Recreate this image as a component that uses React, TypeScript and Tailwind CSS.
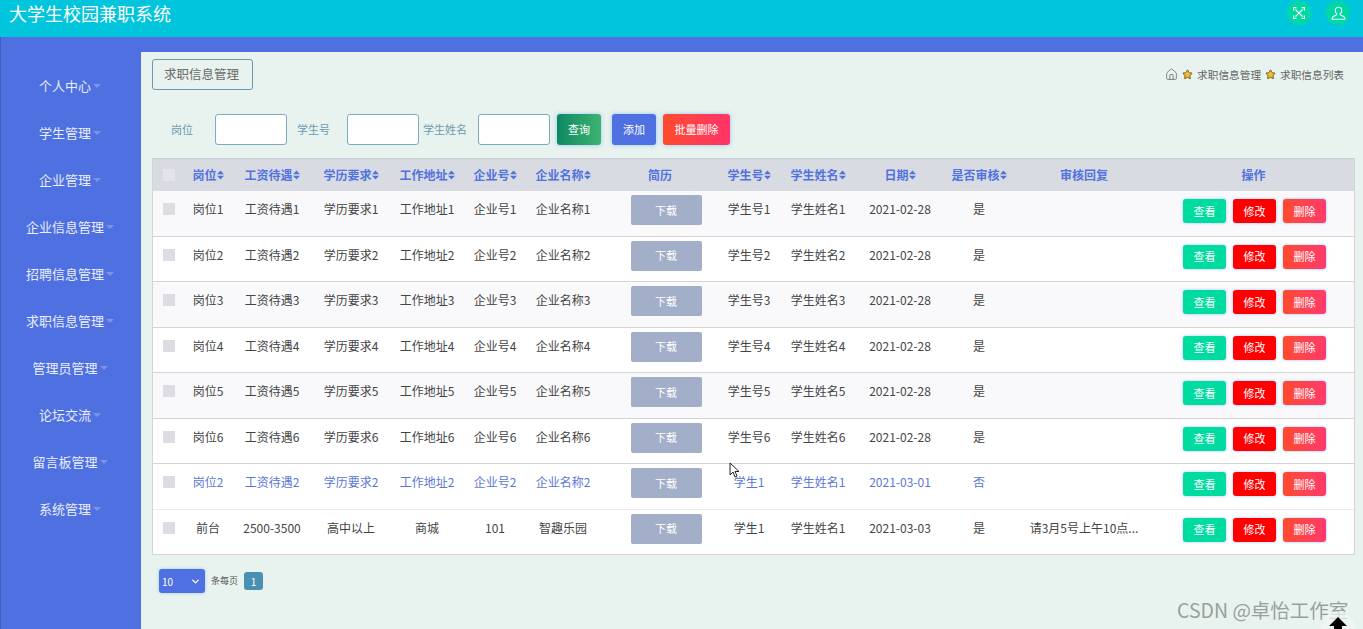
import { ChevronDown, House, Star } from "lucide-react";

const menus = ["个人中心", "学生管理", "企业管理", "企业信息管理", "招聘信息管理", "求职信息管理", "管理员管理", "论坛交流", "留言板管理", "系统管理"];

const cols = "grid grid-cols-[32px_46px_82px_76px_76px_60px_76px_118px_60px_78px_86px_72px_138px_1fr]";

const heads = [
  { label: "岗位", sort: true },
  { label: "工资待遇", sort: true },
  { label: "学历要求", sort: true },
  { label: "工作地址", sort: true },
  { label: "企业号", sort: true },
  { label: "企业名称", sort: true },
  { label: "简历", sort: false },
  { label: "学生号", sort: true },
  { label: "学生姓名", sort: true },
  { label: "日期", sort: true },
  { label: "是否审核", sort: true },
  { label: "审核回复", sort: false },
  { label: "操作", sort: false },
];

const rows = [
  ["岗位1", "工资待遇1", "学历要求1", "工作地址1", "企业号1", "企业名称1", "学生号1", "学生姓名1", "2021-02-28", "是", ""],
  ["岗位2", "工资待遇2", "学历要求2", "工作地址2", "企业号2", "企业名称2", "学生号2", "学生姓名2", "2021-02-28", "是", ""],
  ["岗位3", "工资待遇3", "学历要求3", "工作地址3", "企业号3", "企业名称3", "学生号3", "学生姓名3", "2021-02-28", "是", ""],
  ["岗位4", "工资待遇4", "学历要求4", "工作地址4", "企业号4", "企业名称4", "学生号4", "学生姓名4", "2021-02-28", "是", ""],
  ["岗位5", "工资待遇5", "学历要求5", "工作地址5", "企业号5", "企业名称5", "学生号5", "学生姓名5", "2021-02-28", "是", ""],
  ["岗位6", "工资待遇6", "学历要求6", "工作地址6", "企业号6", "企业名称6", "学生号6", "学生姓名6", "2021-02-28", "是", ""],
  ["岗位2", "工资待遇2", "学历要求2", "工作地址2", "企业号2", "企业名称2", "学生1", "学生姓名1", "2021-03-01", "否", ""],
  ["前台", "2500-3500", "高中以上", "商城", "101", "智趣乐园", "学生1", "学生姓名1", "2021-03-03", "是", "请3月5号上午10点..."],
];

function SortIcon() {
  return (
    <svg width="7" height="10" viewBox="0 0 7 10" className="shrink-0" fill="currentColor">
      <path d="M3.5 0.5 7 4.200H0z" />
      <path d="M3.5 9.500 0 5.800h7z" />
    </svg>
  );
}

function Row({ row, index }: { row: string[]; index: number }) {
  const tone = index === 6 ? "text-[#5b77d6]" : "text-[#444]";
  const bg = index % 2 === 0 && index < 6 ? "bg-[#f9f9fb]" : "bg-white";
  const line = index === 6 ? "border-[#ececec]" : "border-[#d4d4d4]";
  return (
    <div className={`${cols} h-[45.5px] items-center border-b pb-2 text-center text-xs ${line} ${tone} ${bg}`}>
      <div className="ml-2.5 size-3 bg-[#dcdce2]" />
      {row.slice(0, 6).map((cell, i) => (
        <div key={i}>{cell}</div>
      ))}
      <div className="flex justify-center pl-3">
        <button className="mt-0.5 h-[30px] w-[71px] rounded-[2px] bg-[#a3aec8] text-[11px] text-white">下载</button>
      </div>
      {row.slice(6).map((cell, i) => (
        <div key={i}>{cell}</div>
      ))}
      <div className="mt-1 flex justify-center gap-[7px] pl-0.5 text-[11px] text-white">
        <button className="h-6 w-[43px] rounded-[3px] bg-[#00dc9f] shadow-[0_0_3px_rgba(90,150,255,0.6)]">查看</button>
        <button className="h-6 w-[43px] rounded-[3px] bg-[#ff0000] shadow-[0_0_3px_rgba(90,150,255,0.6)]">修改</button>
        <button className="h-6 w-[43px] rounded-[3px] bg-gradient-to-r from-[#ff4a2a] to-[#ff3a6a] shadow-[0_0_3px_rgba(90,150,255,0.6)]">删除</button>
      </div>
    </div>
  );
}

export default function App() {
  return (
    <div className="relative flex h-[629px] flex-col overflow-hidden font-['Noto_Sans_CJK_SC','Noto_Sans',sans-serif]">
      <header className="flex h-[37px] shrink-0 items-start justify-between bg-[#00c5dd] pl-[9px] pr-[13px]">
        <h1 className="-mt-px text-lg leading-[29px] text-white">大学生校园兼职系统</h1>
        <div className="mt-px flex gap-[15px]">
          <div className="flex size-6 items-center justify-center rounded-full bg-[#00d9a3] text-white">
            <svg width="12" height="12" viewBox="0 0 12 12" fill="none" stroke="currentColor" strokeWidth="1.1">
              <path d="M2.500 2.500 9.500 9.500M9.500 2.500 2.500 9.500" />
              <path d="M.6 3.400V.6h2.800M8.600.6h2.800v2.800M11.400 8.600v2.800H8.600M3.400 11.400H.6V8.600" />
            </svg>
          </div>
          <div className="flex size-6 items-center justify-center rounded-full bg-[#00d9a3] text-white">
            <svg width="15" height="15" viewBox="0 0 15 15" fill="none" stroke="currentColor" strokeWidth="1.1">
              <path d="M7.500 1.200c-2 0-3.200 1.500-3.200 3.400 0 1.300.6 2.400 1.400 3 .3.300.3 1-.2 1.300L2.300 10.500c-.7.400-1.100 1-1.100 1.800v1h12.600v-1c0-.8-.4-1.400-1.100-1.800L9.500 8.900c-.5-.3-.5-1-.2-1.300.8-.6 1.400-1.700 1.400-3 0-1.900-1.200-3.400-3.200-3.400z" />
            </svg>
          </div>
        </div>
      </header>

      <div className="flex flex-1 border-l border-[#3f5cc0] bg-[#4f70e0]">
        <aside className="w-[140px] shrink-0 pt-[25px]">
          {menus.map((name) => (
            <div key={name} className="flex h-[47px] items-center justify-center pr-0.5 text-[13px] text-[#e8eefc]">
              {name}
              <svg width="8" height="4" viewBox="0 0 8 4" className="ml-0.5 text-[#7f93e4]" fill="currentColor">
                <path d="M0 0h8L4 4z" />
              </svg>
            </div>
          ))}
        </aside>

        <main className="mt-[15px] min-w-0 flex-1 bg-[#e8f2ee] pl-[11px] pr-2 pt-[7px]">
          <div className="flex h-[31px] items-center justify-between">
            <div className="flex h-[31px] w-[101px] items-center justify-center rounded-[3px] border-[1.5px] border-[#6a9ab0] pr-0.5 text-[12.5px] text-[#6a6a6a]">
              求职信息管理
            </div>
            <div className="flex items-center pr-[11px] text-[10.67px] text-[#666]">
              <House size={13} strokeWidth={1.4} className="mr-1" />
              <Star size={11} className="mr-1 fill-[#f5b82e] text-[#6b5a20]" />
              <span>求职信息管理</span>
              <Star size={11} className="mx-1 fill-[#f5b82e] text-[#6b5a20]" />
              <span>求职信息列表</span>
            </div>
          </div>

          <div className="mt-6 flex h-[31px] items-center text-[11px] text-[#6a9ab0]">
            <span className="w-[63px] pl-[19px]">岗位</span>
            <div className="h-[31px] w-[72px] rounded-[3px] border border-[#7fa9bd] bg-white" />
            <span className="w-[60px] pl-2.5">学生号</span>
            <div className="h-[31px] w-[72px] rounded-[3px] border border-[#7fa9bd] bg-white" />
            <span className="w-[59px] pl-1">学生姓名</span>
            <div className="h-[31px] w-[72px] rounded-[3px] border border-[#7fa9bd] bg-white" />
            <button className="ml-[7px] h-[31px] w-[44px] rounded-[3px] bg-gradient-to-r from-[#0a8862] to-[#3cb371] text-[11px] text-white shadow-[0_0_4px_rgba(90,170,255,0.6)]">查询</button>
            <button className="ml-[11px] h-[31px] w-[44px] rounded-[3px] bg-[#4f70e0] text-[11px] text-white shadow-[0_0_4px_rgba(90,170,255,0.6)]">添加</button>
            <button className="ml-[7px] h-[31px] w-[67px] rounded-[3px] bg-gradient-to-r from-[#ff4a2a] to-[#ff3366] text-[11px] text-white shadow-[0_0_4px_rgba(90,170,255,0.6)]">批量删除</button>
          </div>

          <div className="mt-[13px] border-x border-[#d4d4d4]">
            <div className={`${cols} h-[33px] items-center border-t border-[#c8ccd2] bg-[#d8dce2] text-center text-xs font-semibold text-[#5272de]`}>
              <div className="ml-2.5 size-3 bg-[#e2e4ea]" />
              {heads.map((h) => (
                <div key={h.label} className="flex items-center justify-center">
                  {h.label}
                  {h.sort && <SortIcon />}
                </div>
              ))}
            </div>
            {rows.map((row, i) => (
              <Row key={i} row={row} index={i} />
            ))}
          </div>

          <div className="mt-[14px] flex items-center pl-[7px]">
            <div className="flex h-6 w-[46px] items-center justify-between rounded-[3px] bg-[#4f70e0] pl-[3px] pr-1 text-[10px] text-white shadow-[0_0_3px_rgba(90,170,255,0.6)]">
              10
              <ChevronDown size={11} strokeWidth={3} />
            </div>
            <span className="ml-1.5 text-[9px] text-[#555]">条每页</span>
            <div className="ml-1.5 flex h-[18px] w-[19px] items-center justify-center rounded-[3px] bg-[#4a90b4] text-[10px] text-white">1</div>
          </div>
        </main>
      </div>

      <span className="absolute left-[1177px] top-[598px] text-[19.5px] leading-6 text-[#9a9f9d]">CSDN @卓怡工作室</span>
      <svg width="12" height="17" viewBox="0 0 12 17" className="absolute left-[729px] top-[462px]" fill="white" stroke="#222" strokeWidth="1">
        <path d="M1 1v12l3-3 2 5 2-1-2-4.500h4z" />
      </svg>
      <div className="absolute left-[1321px] top-[612px] flex h-[34px] w-[34px] justify-center rounded-full bg-[#f2f6f4]/70">
        <svg width="18" height="16" viewBox="0 0 18 16" className="mt-[5px]" fill="black">
          <path d="M9 0 18 9H13V16H5V9H0z" />
        </svg>
      </div>
    </div>
  );
}
